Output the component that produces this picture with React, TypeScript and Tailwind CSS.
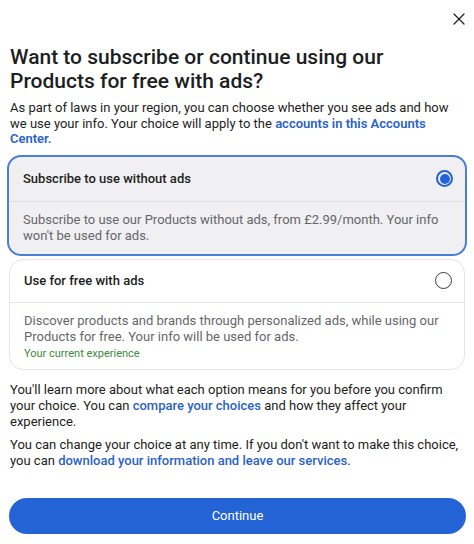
import { X } from "lucide-react";

const FONT = { fontFamily: "Roboto, 'Noto Sans', sans-serif" };

function Radio({ checked }: { checked: boolean }) {
  return checked ? (
    <span className="w-[17px] h-[17px] rounded-full border-2 border-[#2463d6] flex items-center justify-center shrink-0">
      <span className="w-[10px] h-[10px] rounded-full bg-[#2463d6]" />
    </span>
  ) : (
    <span className="w-[17px] h-[17px] rounded-full border-[1.5px] border-[#3a3b3d] shrink-0" />
  );
}

export default function App() {
  return (
    <div className="w-[474px] h-[544px] bg-white text-[#1c1e21] relative overflow-hidden" style={FONT}>
      {/* Close */}
      <div className="flex justify-end pt-[9px] pr-[5px]">
        <X size={20} strokeWidth={1.5} className="text-[#1c1e21]" />
      </div>

      <div className="px-[10px]">
        <h1 className="mt-[16px] text-[21px] leading-[24px] font-medium">
          Want to subscribe or continue using our Products for free with ads?
        </h1>
        <p className="mt-[7px] text-[13px] leading-[15.5px] text-[#1c1e21] pr-[10px]">
          As part of laws in your region, you can choose whether you see ads and how we use your info. Your choice will
          apply to the <span className="font-semibold text-[#2a62c9]">accounts in this Accounts Center.</span>
        </p>
      </div>

      {/* Option 1 */}
      <div className="mx-[7px] mt-[8px] rounded-[14px] border-2 border-[#4a7fd8] bg-[#f0f0f2]">
        <div className="flex items-center justify-between h-[45px] pl-[14px] pr-[12px] border-b border-[#dfe0e3]">
          <span className="text-[13px] font-medium">Subscribe to use without ads</span>
          <Radio checked />
        </div>
        <p className="px-[14px] pt-[10px] pb-[10px] text-[13px] leading-[16px] text-[#65676b]">
          Subscribe to use our Products without ads, from £2.99/month. Your info won't be used for ads.
        </p>
      </div>

      {/* Option 2 */}
      <div className="mx-[9px] mt-[3px] rounded-[14px] border border-[#e4e5e8] bg-white">
        <div className="flex items-center justify-between h-[43px] pl-[14px] pr-[12px] border-b border-[#e4e5e8]">
          <span className="text-[13px] font-medium">Use for free with ads</span>
          <Radio checked={false} />
        </div>
        <div className="px-[14px] pt-[10px] pb-[8px]">
          <p className="text-[13px] leading-[16px] text-[#65676b]">
            Discover products and brands through personalized ads, while using our Products for free. Your info will be
            used for ads.
          </p>
          <p className="mt-[1px] text-[11px] leading-[15px] text-[#3d8a3d]">Your current experience</p>
        </div>
      </div>

      <div className="px-[10px] pr-[14px] mt-[12px] text-[13px] leading-[16px]">
        <p>
          You'll learn more about what each option means for you before you confirm your choice. You can{" "}
          <span className="font-medium text-[#2a62c9]">compare your choices</span> and how they affect your
          experience.
        </p>
        <p className="mt-[7px]">
          You can change your choice at any time. If you don't want to make this choice, you can{" "}
          <span className="font-medium text-[#2a62c9]">download your information and leave our services</span>.
        </p>
      </div>

      <button
        type="button"
        className="absolute left-[9px] right-[8px] top-[498px] h-[36px] rounded-full bg-[#2463d6] text-white text-[13px] font-normal"
      >
        Continue
      </button>
    </div>
  );
}
